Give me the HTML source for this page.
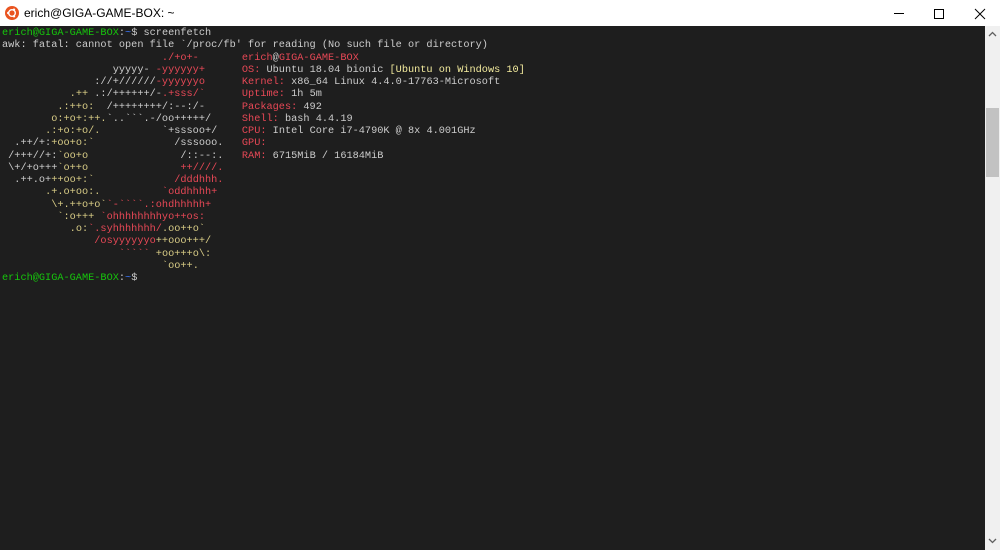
<!DOCTYPE html>
<html><head><meta charset="utf-8"><style>
html,body{margin:0;padding:0;width:1000px;height:550px;overflow:hidden;background:#1e1e1e}
#title{position:absolute;left:0;top:0;width:1000px;height:26px;background:#fff;font-family:"Liberation Sans",sans-serif;font-size:12px;color:#000}
#title .t{position:absolute;left:24px;top:6px}
#term{position:absolute;left:0;top:26px;width:985px;height:524px;background:#1e1e1e}
pre{margin:0;position:absolute;left:2px;top:1px;font-family:"Liberation Mono",monospace;font-size:10.25px;line-height:12.25px;color:#cccccc}
.g{color:#16c60c}.b{color:#3b78ff}.r{color:#e74856}.y{color:#d8cc86}.yy{color:#f4ec9e}
#sb{position:absolute;left:985px;top:26px;width:15px;height:524px;background:#f0f0f0}
#thumb{position:absolute;left:1px;top:82px;width:13px;height:69px;background:#c2c2c2}
</style></head><body>
<div id="title">
<svg style="position:absolute;left:5px;top:6px" width="14" height="14" viewBox="0 0 14 14"><circle cx="7" cy="7" r="7" fill="#e95420"/><circle cx="7" cy="7" r="3.3" fill="none" stroke="#fff" stroke-width="1.4"/><circle cx="3.2" cy="7" r="1.2" fill="#fff"/><circle cx="9" cy="3.7" r="1.2" fill="#fff"/><circle cx="9" cy="10.3" r="1.2" fill="#fff"/></svg>
<span class="t">erich@GIGA-GAME-BOX: ~</span>
<svg style="position:absolute;left:893px;top:7px" width="100" height="14" viewBox="0 0 100 14"><line x1="1" y1="6.5" x2="11" y2="6.5" stroke="#000" stroke-width="1"/><rect x="41.5" y="2.5" width="9" height="9" fill="none" stroke="#000"/><path d="M82 2 L92 12 M92 2 L82 12" stroke="#000" stroke-width="1"/></svg>
</div>
<div id="term"><pre><span class="g">erich@GIGA-GAME-BOX</span>:<span class="b">~</span>$ screenfetch
awk: fatal: cannot open file &#96;/proc/fb' for reading (No such file or directory)
<span class="r">                          ./+o+-       erich</span>@<span class="r">GIGA-GAME-BOX</span>
                  yyyyy- <span class="r">-yyyyyy+</span>      <span class="r">OS:</span> Ubuntu 18.04 bionic <span class="yy">[Ubuntu on Windows 10]</span>
               ://+//////<span class="r">-yyyyyyo</span>      <span class="r">Kernel:</span> x86_64 Linux 4.4.0-17763-Microsoft
           <span class="y">.++</span> .:/++++++/-<span class="r">.+sss/&#96;</span>      <span class="r">Uptime:</span> 1h 5m
         <span class="y">.:++o:</span>  /++++++++/:--:/-      <span class="r">Packages:</span> 492
        <span class="y">o:+o+:++.</span>&#96;..&#96;&#96;&#96;.-/oo+++++/     <span class="r">Shell:</span> bash 4.4.19
       <span class="y">.:+o:+o/.</span>          &#96;+sssoo+/    <span class="r">CPU:</span> Intel Core i7-4790K @ 8x 4.001GHz
  .++/+:<span class="y">+oo+o:&#96;</span>             /sssooo.   <span class="r">GPU:</span>
 /+++//+:<span class="y">&#96;oo+o</span>               /::--:.   <span class="r">RAM:</span> 6715MiB / 16184MiB
 \+/+o+++<span class="y">&#96;o++o</span><span class="r">               ++////.</span>
  .++.o+<span class="y">++oo+:&#96;</span><span class="r">             /dddhhh.</span>
       <span class="y">.+.o+oo:.</span><span class="r">          &#96;oddhhhh+</span>
        <span class="y">\+.++o+o&#96;</span><span class="r">&#96;-&#96;&#96;&#96;&#96;.:ohdhhhhh+</span>
         <span class="y">&#96;:o+++</span> <span class="r">&#96;ohhhhhhhhyo++os:</span>
           <span class="y">.o:</span><span class="r">&#96;.syhhhhhhh/</span><span class="y">.oo++o&#96;</span>
               <span class="r">/osyyyyyyo</span><span class="y">++ooo+++/</span>
                   <span class="r">&#96;&#96;&#96;&#96;&#96;</span> <span class="y">+oo+++o\:</span>
                          <span class="y">&#96;oo++.</span>
<span class="g">erich@GIGA-GAME-BOX</span>:<span class="b">~</span>$
</pre></div>
<div id="sb"><div id="thumb"></div>
<svg style="position:absolute;left:3px;top:5px" width="9" height="6"><path d="M1 5 L4.5 1.5 L8 5" fill="none" stroke="#606060" stroke-width="1.3"/></svg>
<svg style="position:absolute;left:3px;top:512px" width="9" height="6"><path d="M1 1 L4.5 4.5 L8 1" fill="none" stroke="#606060" stroke-width="1.3"/></svg>
</div>
</body></html>
